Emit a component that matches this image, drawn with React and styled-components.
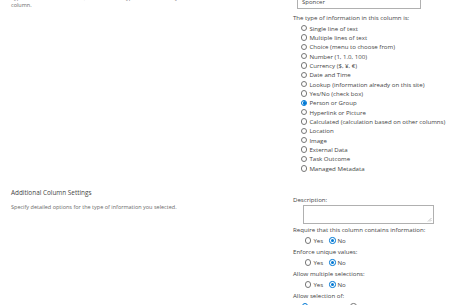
import styled, { createGlobalStyle } from "styled-components";

const Global = createGlobalStyle`
  html, body { margin: 0; padding: 0; background: #ffffff; }
  body {
    font-family: "Open Sans", "Noto Sans", sans-serif;
    font-size: 6px;
    color: #444444;
    overflow: hidden;
  }
`;

const Page = styled.div`
  margin-top: -5px;
  padding-left: 11px;
  width: 463px;
`;

const Section = styled.div`
  display: grid;
  grid-template-columns: 282px 1fr;
  padding-top: ${(p) => p.top || 0}px;
`;

const Side = styled.div`
  display: flex;
  flex-direction: column;
  gap: 7px;
`;

const SideTitle = styled.div`
  font-size: 6.4px;
  color: #444444;
  line-height: 8px;
`;

const SideText = styled.div`
  width: 232px;
  font-size: 5.5px;
  line-height: 7px;
  color: #6a6a6a;
`;

const Fields = styled.div`
  display: flex;
  flex-direction: column;
  padding-top: ${(p) => p.top || 0}px;
`;

const TextBox = styled.div`
  box-sizing: border-box;
  width: 124px;
  height: 14px;
  margin: 0 0 4px 4px;
  border: 0.7px solid #b0b0b0;
  padding: 0 4px;
  display: flex;
  align-items: center;
  font-size: 6px;
  color: #444444;
`;

const Label = styled.div`
  font-size: 6.1px;
  line-height: ${(p) => p.lh || 10}px;
  color: #444444;
  white-space: nowrap;
`;

const RadioList = styled.div`
  display: flex;
  flex-direction: column;
  padding-left: 8px;
  padding-top: 0.5px;
`;

const InlineRadios = styled.div`
  display: flex;
  align-items: center;
  gap: 6px;
  padding-left: ${(p) => p.indent || 12}px;
  height: 11px;
`;

const Option = styled.label`
  display: flex;
  align-items: center;
  gap: 2px;
  height: ${(p) => p.h || 9.35}px;
  font-size: 6.1px;
  color: #444444;
  white-space: nowrap;
`;

const Dot = styled.span`
  box-sizing: border-box;
  width: 6.4px;
  height: 6.4px;
  border-radius: 50%;
  border: 0.6px solid ${(p) => (p.on ? "#0078d4" : "#777777")};
  display: flex;
  align-items: center;
  justify-content: center;
  flex-shrink: 0;
  &::after {
    content: "";
    width: 3.4px;
    height: 3.4px;
    border-radius: 50%;
    background: ${(p) => (p.on ? "#0078d4" : "transparent")};
  }
`;

const Area = styled.div`
  position: relative;
  box-sizing: border-box;
  width: 131px;
  height: 19px;
  margin: 1px 0 0 10px;
  border: 0.7px solid #b0b0b0;
`;

const Grip = styled.svg`
  position: absolute;
  right: 1px;
  bottom: 1px;
`;

const types = [
  "Single line of text",
  "Multiple lines of text",
  "Choice (menu to choose from)",
  "Number (1, 1.0, 100)",
  "Currency ($, ¥, €)",
  "Date and Time",
  "Lookup (information already on this site)",
  "Yes/No (check box)",
  "Person or Group",
  "Hyperlink or Picture",
  "Calculated (calculation based on other columns)",
  "Location",
  "Image",
  "External Data",
  "Task Outcome",
  "Managed Metadata",
];

const YesNo = () => (
  <InlineRadios>
    <Option h={11}>
      <Dot />
      Yes
    </Option>
    <Option h={11}>
      <Dot on />
      No
    </Option>
  </InlineRadios>
);

export default function App() {
  return (
    <>
      <Global />
      <Page>
        <Section>
          <Side>
            <SideText>
              Type a name for this column, and select the type of information you want to store in the
              column.
            </SideText>
          </Side>
          <Fields>
            <TextBox>Sponcer</TextBox>
            <Label lh={10}>The type of information in this column is:</Label>
            <RadioList>
              {types.map((t) => (
                <Option key={t}>
                  <Dot on={t === "Person or Group"} />
                  {t}
                </Option>
              ))}
            </RadioList>
          </Fields>
        </Section>
        <Section top={16}>
          <Side>
            <SideTitle>Additional Column Settings</SideTitle>
            <SideText>Specify detailed options for the type of information you selected.</SideText>
          </Side>
          <Fields top={6}>
            <Label lh={9}>Description:</Label>
            <Area>
              <Grip width="5" height="5" viewBox="0 0 5 5">
                <path d="M4.5 1 L1 4.5 M4.5 3 L3 4.5" stroke="#999" strokeWidth="0.6" />
              </Grip>
            </Area>
            <Label lh={11}>Require that this column contains information:</Label>
            <YesNo />
            <Label lh={11}>Enforce unique values:</Label>
            <YesNo />
            <Label lh={11}>Allow multiple selections:</Label>
            <YesNo />
            <Label lh={11}>Allow selection of:</Label>
            <InlineRadios indent={9}>
              <Option h={11}>
                <Dot on />
                People Only
              </Option>
              <Option h={11}>
                <Dot />
                People and Groups
              </Option>
            </InlineRadios>
          </Fields>
        </Section>
      </Page>
    </>
  );
}
